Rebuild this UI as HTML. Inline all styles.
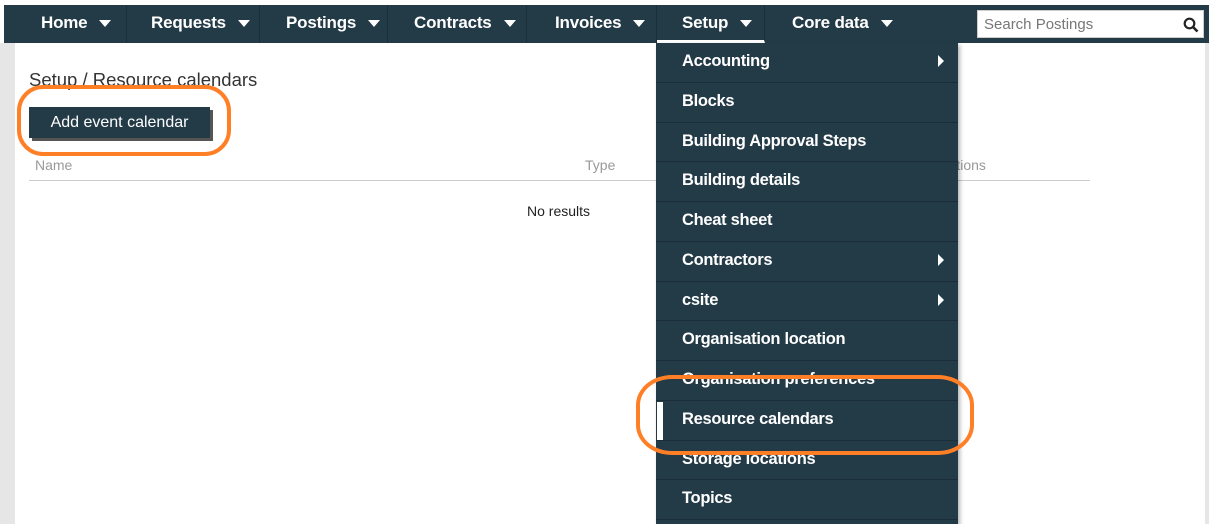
<!DOCTYPE html>
<html><head><style>
body{margin:0;width:1209px;height:524px;overflow:hidden;background:#fff;font-family:"Liberation Sans",sans-serif;position:relative}
.nav{position:absolute;left:4px;top:5px;width:1205px;height:38px;background:#233a47}
.ni{position:absolute;top:0;height:38px;line-height:36px;color:#fff;font-size:17px;font-weight:bold;border-right:1px solid #1b2e39;box-sizing:border-box;letter-spacing:-0.2px}
.ni span{display:inline-block;width:0;height:0;border-left:6px solid transparent;border-right:6px solid transparent;border-top:7px solid #fff;margin-left:12px;vertical-align:middle}
.gray{position:absolute;left:0;top:43px;width:15px;height:481px;background:#e6e6e6}
.menu{position:absolute;left:656px;top:43px;width:302px;height:481px;background:#233a47;box-shadow:2px 2px 4px rgba(0,0,0,.3)}
.mi{height:38.75px;border-bottom:1px solid #1a2d38;color:#fff;font-size:16.5px;font-weight:bold;line-height:36px;padding-left:26px;position:relative;letter-spacing:-0.3px}
.arr{position:absolute;right:14px;top:12px;border-top:6px solid transparent;border-bottom:6px solid transparent;border-left:6px solid #fff}
.ring{position:absolute;border:4px solid #ff7f27;box-sizing:border-box}
</style></head><body>
<div class="nav">
<div class="ni" style="left:0;width:123px;padding-left:37px">Home<span></span></div>
<div class="ni" style="left:123px;width:133px;padding-left:24px">Requests<span></span></div>
<div class="ni" style="left:256px;width:128px;padding-left:26px">Postings<span></span></div>
<div class="ni" style="left:384px;width:139px;padding-left:26px">Contracts<span></span></div>
<div class="ni" style="left:523px;width:130px;padding-left:28px">Invoices<span></span></div>
<div class="ni" style="left:653px;width:108px;padding-left:25px;border-bottom:3px solid #fff">Setup<span></span></div>
<div class="ni" style="left:761px;width:140px;padding-left:27px;border-right:none">Core data<span></span></div>
<div style="position:absolute;left:973px;top:5px;width:227px;height:28px;background:#fff;border:1px solid #ccc;box-sizing:border-box">
<span style="position:absolute;left:6px;top:5px;font-size:15px;color:#777">Search Postings</span>
<svg style="position:absolute;right:4px;top:6px" width="16" height="16" viewBox="0 0 16 16"><circle cx="6.5" cy="6.5" r="4.8" fill="none" stroke="#222" stroke-width="2.2"/><line x1="10" y1="10" x2="14.5" y2="14.5" stroke="#222" stroke-width="2.6"/></svg>
</div>
</div>
<div class="gray"></div>
<div style="position:absolute;left:1205px;top:43px;width:4px;height:481px;background:#e6e6e6"></div>
<div style="position:absolute;left:29px;top:69px;font-size:18.5px;color:#333">Setup / Resource calendars</div>
<div style="position:absolute;left:29px;top:107px;width:181px;height:31px;background:#233a47;color:#fff;font-size:16px;line-height:31px;text-align:center;box-shadow:3px 3px 0 #555">Add event calendar</div>
<div style="position:absolute;left:35px;top:157px;font-size:14px;color:#999">Name</div>
<div style="position:absolute;left:585px;top:157px;font-size:14px;color:#999">Type</div>
<div style="position:absolute;left:940px;top:157px;font-size:14px;color:#999">Actions</div>
<div style="position:absolute;left:29px;top:180px;width:1061px;height:1px;background:#ccc"></div>
<div style="position:absolute;left:527px;top:203px;font-size:14px;color:#222">No results</div>
<div class="menu">
<div class="mi">Accounting<i class="arr"></i></div>
<div class="mi">Blocks</div>
<div class="mi">Building Approval Steps</div>
<div class="mi">Building details</div>
<div class="mi">Cheat sheet</div>
<div class="mi">Contractors<i class="arr"></i></div>
<div class="mi">csite<i class="arr"></i></div>
<div class="mi">Organisation location</div>
<div class="mi">Organisation preferences</div>
<div class="mi"><b style="position:absolute;left:1px;top:1px;width:6px;height:38px;background:#fff"></b>Resource calendars</div>
<div class="mi">Storage locations</div>
<div class="mi">Topics</div>
</div>
<div class="ring" style="left:17px;top:85px;width:214px;height:71px;border-radius:26px"></div>
<div class="ring" style="left:636px;top:375px;width:338px;height:80px;border-radius:36px/30px"></div>
</body></html>
